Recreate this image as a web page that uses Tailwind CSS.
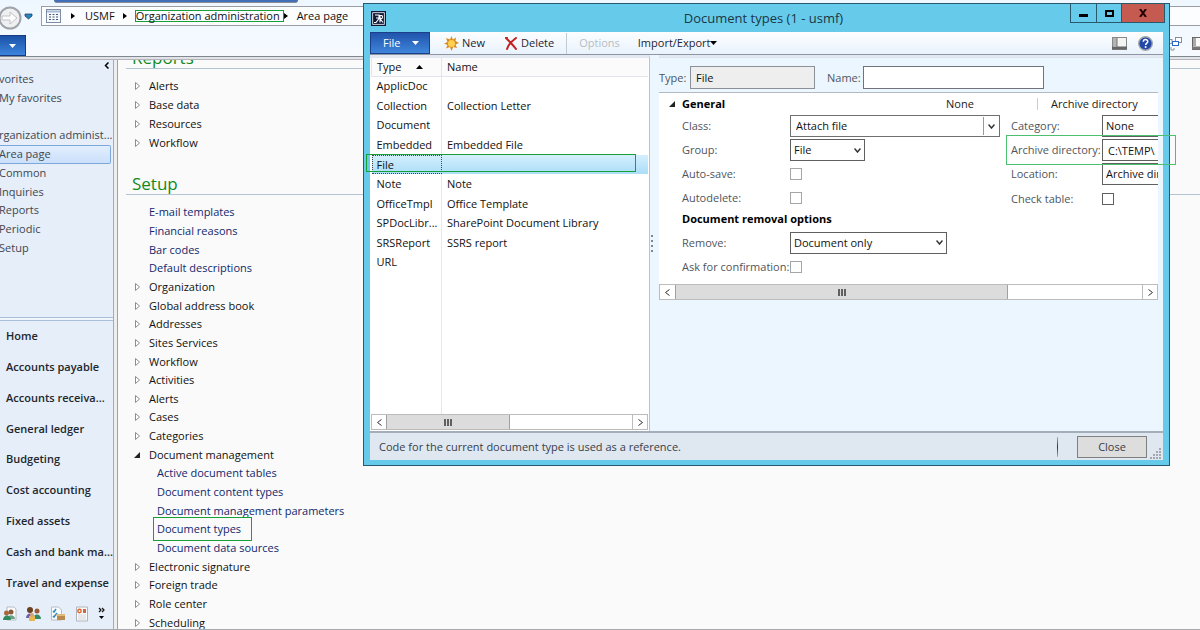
<!DOCTYPE html>
<html lang="en">
<head>
<meta charset="utf-8">
<title>Area page</title>
<script src="https://cdn.jsdelivr.net/npm/@tailwindcss/browser@4"></script>
</head>
<body class="relative flex h-screen flex-col overflow-hidden bg-[#fafafa] font-['Open_Sans','Noto_Sans',sans-serif] text-[11px] leading-4 text-[#111]">

<!-- Main window header -->
<header class="relative flex h-[57px] shrink-0 flex-col border-b border-[#808890] bg-linear-to-b from-[#eef7ff] to-[#f6faff]">
  <div class="absolute top-0 left-[54px] h-[3px] w-[244px] rounded-b-sm border-b border-[#8c8c98] bg-[#4270b8]"></div>
  <div class="flex h-[26px] items-end">
    <button aria-label="Forward" class="-ml-0.5 -mb-1"><svg width="24" height="24" viewBox="0 0 24 24"><circle cx="12" cy="12" r="10.5" fill="#eef0f2" stroke="#a0a4a8" stroke-width="2"/><path d="M4 10h8V6l7 6-7 6v-4H4z" fill="#fdfdfd" stroke="#c0c2c6"/></svg></button>
    <button aria-label="History" class="ml-0.5 mb-1.5"><svg width="9" height="7" viewBox="0 0 9 7"><path d="M1 1h7v2L4.500 6 1 3z" fill="#2a84bc" stroke="#1c4470" stroke-width=".8"/></svg></button>
    <nav aria-label="Address" class="ml-2 flex h-5 flex-1 items-center border border-r-0 border-[#9a9ea4] bg-[#fcfdff] pl-1">
      <svg width="15" height="14" viewBox="0 0 15 14"><rect x=".5" y=".5" width="14" height="13" fill="#f4f7fb" stroke="#7e8da4"/><path d="M1 2.500h13" stroke="#a9bad4" stroke-width="2"/><path d="M3 5.500h2M6.500 5.500h2M10 5.500h2M3 8h2M6.500 8h2M10 8h2M3 10.500h2M6.500 10.500h2M10 10.500h2" stroke="#4c5870"/></svg>
      <svg class="ml-[10px]" width="4" height="6"><path d="M0 0l4 3-4 3z"/></svg>
      <a href="#" class="ml-[10px]">USMF</a>
      <svg class="ml-2" width="4" height="6"><path d="M0 0l4 3-4 3z"/></svg>
      <a href="#" class="ml-2 h-[12px] w-[149px] border border-[#17a035] leading-[10px] whitespace-nowrap">Organization administration</a>
      <svg width="4" height="6"><path d="M0 0l4 3-4 3z"/></svg>
      <a href="#" class="ml-[9px]">Area page</a>
    </nav>
  </div>
  <div class="flex flex-1 items-end justify-between">
    <button aria-label="File menu" class="flex h-[21px] w-[26px] items-center justify-center border border-l-0 border-[#173a80] bg-linear-to-b from-[#1c52a8] to-[#3c84dc]"><svg width="7" height="4"><path d="M0 0h7L3.500 4z" fill="#fff"/></svg></button>
    <div class="flex items-start gap-2 pb-[5px]">
      <svg width="14" height="14" viewBox="0 0 14 14" fill="#fff" stroke="#8a8e96"><rect x="5.500" y=".5" width="6" height="5"/><rect x="-3" y="2.500" width="5" height="4"/><path d="M1 10v3h3v-2"/><rect x="2.500" y="4.500" width="6" height="4" stroke="#2766c8"/></svg>
      <svg width="8" height="13" viewBox="0 0 8 13"><rect x=".5" y=".5" width="12" height="12" fill="#fafafa" stroke="#666"/><path d="M1 1h3v8H1z" fill="#aaa"/><path d="M0 11h8" stroke="#777" stroke-width="3"/></svg>
    </div>
  </div>
</header>
<div class="h-[3px] shrink-0 border-b border-[#b4b4ba] bg-[#e2e3e8]"></div>

<div class="flex min-h-0 flex-1 border-b border-[#a8a8ac]">
  <!-- Navigation pane -->
  <aside class="relative flex w-[114px] shrink-0 flex-col border-r border-[#a4aab6] bg-[#e5eef9]">
    <button aria-label="Collapse" class="absolute top-0.5 right-1"><svg width="5" height="7"><path d="M4.500 .5L1.500 3.500l3 3" fill="none" stroke="#000" stroke-width="1.500"/></svg></button>
    <nav class="mt-[10px] grid h-[187px] auto-rows-fr items-center whitespace-nowrap text-[#42464e]">
      <a href="#" class="-ml-px">vorites</a>
      <a href="#" class="-ml-px">My favorites</a>
      <span></span>
      <a href="#" class="-ml-px">rganization administ...</a>
      <a href="#" class="-ml-px mr-0.5 flex items-center self-stretch rounded-r-xs border border-l-0 border-[#7da7d8] bg-linear-to-b from-[#e2eefd] to-[#cbe0fb]">Area page</a>
      <a href="#" class="-ml-px">Common</a>
      <a href="#" class="-ml-px">Inquiries</a>
      <a href="#" class="-ml-px">Reports</a>
      <a href="#" class="-ml-px">Periodic</a>
      <a href="#" class="-ml-px">Setup</a>
    </nav>
    <div class="mt-auto h-1 border-y border-[#a9bfdc] bg-[#f0f5fb]"></div>
    <nav class="grid h-[277px] auto-rows-fr items-center pl-1.5 font-semibold whitespace-nowrap text-[#22262c]">
      <a href="#">Home</a><a href="#">Accounts payable</a><a href="#">Accounts receiva...</a><a href="#">General ledger</a><a href="#">Budgeting</a><a href="#">Cost accounting</a><a href="#">Fixed assets</a><a href="#">Cash and bank ma...</a><a href="#">Travel and expense</a>
    </nav>
    <div class="flex h-[31px] items-center gap-[9px] pl-0.5">
      <button aria-label="Human resources"><svg width="15" height="16" viewBox="0 0 15 16"><path d="M5 1h7l2 2v11H5z" fill="#fafbfc" stroke="#b8bcc2"/><circle cx="9" cy="6" r="2.500" fill="#8c5a38"/><path d="M5 13c0-5 8-5 8 0z" fill="#6aa088"/><circle cx="4.500" cy="7" r="2.500" fill="#a8683c"/><path d="M1 14c0-6 8-6 8 0z" fill="#2e8a5c"/></svg></button>
      <button aria-label="Customers"><svg width="15" height="16" viewBox="0 0 15 16"><circle cx="4" cy="4" r="3" fill="#6b4020"/><path d="M0 12c0-6 8-6 8 0z" fill="#6f5fa8"/><circle cx="11" cy="5" r="2.500" fill="#9c5a34"/><path d="M7 13c0-6 8-6 8 0z" fill="#348a64"/><path d="M3 10h6v5H3z" fill="#e8b850"/><circle cx="6" cy="9" r="2" fill="#d8a470"/></svg></button>
      <button aria-label="Procurement"><svg width="15" height="16" viewBox="0 0 15 16"><path d="M1.500 1h7l3 3v10h-10z" fill="#fafbfc" stroke="#b8bcc2"/><path d="M3 5l1 1 2-3M3 10l1 1 3-4" fill="none" stroke="#2c8cc8" stroke-width="1.500"/><path d="M7 9h8v5H7z" fill="#b88a50"/><path d="M6.500 8h8.500v2H6.500z" fill="#dfba78"/></svg></button>
      <button aria-label="Sales"><svg width="15" height="16" viewBox="0 0 15 16"><path d="M2.500 1h11v14h-11z" fill="#fbfbfc" stroke="#b0b4ba"/><circle cx="5.500" cy="5" r="1.700" fill="none" stroke="#e06428" stroke-width="1.400"/><path d="M9 3h3v4H9z" fill="#cc6650"/><path d="M4 9h8M4 11h8M4 13h8" stroke="#d0d4d8"/></svg></button>
      <button aria-label="More modules"><svg width="8" height="14" viewBox="0 0 8 14"><path d="M1 1l2 2-2 2M4 1l2 2-2 2" fill="none" stroke="#111" stroke-width="1.200"/><path d="M1 9h5L3.500 12z"/></svg></button>
    </div>
  </aside>
  <div class="w-1 shrink-0 border-r border-[#a0a0a6] bg-[#eeeeef]"></div>

  <!-- Area page content -->
  <main class="flex min-w-0 flex-1 flex-col overflow-hidden pl-2 whitespace-nowrap">
    <div class="flex h-[9px] shrink-0 items-end border-b border-[#b4c4d2] pl-1.5"><h2 class="text-[17px] leading-5 text-[#128a1c]">Reports</h2></div>
    <div class="mt-2 grid h-[75px] shrink-0 auto-rows-fr items-center" id="reports"></div>
    <h2 class="mt-[19px] h-[24px] shrink-0 border-b border-[#b4c4d2] pl-1.5 text-[17px] leading-[26px] text-[#128a1c]">Setup</h2>
    <div class="mt-2 grid h-[429px] shrink-0 auto-rows-fr items-center" id="setup"></div>
  </main>
</div>

<!-- Document types dialog -->
<section role="dialog" aria-labelledby="dlg" class="absolute top-[3px] left-[363px] flex h-[463px] w-[807px] flex-col border border-[#275a70] bg-[#66cbea] px-1.5 pb-[5px]">
  <div class="relative flex h-[28px] shrink-0 items-center">
    <svg class="ml-px" width="15" height="15" viewBox="0 0 15 15"><rect x=".75" y=".75" width="13.500" height="13.500" fill="#101838" stroke="#101838" stroke-width="1.500"/><rect x="1.700" y="1.700" width="11.600" height="11.600" fill="none" stroke="#fff" stroke-width=".8"/><path d="M4 4h4v3.500L5 11.500H3M5 7h3M9 11.500V4.500h2q1 1.500 0 3H9l3 4" fill="none" stroke="#fff" stroke-width="1.100"/></svg>
    <h1 id="dlg" class="flex-1 pr-[22px] text-center text-[13px] leading-4 text-[#1c3644]">Document types (1 - usmf)</h1>
    <div class="absolute -top-px right-[-2px] flex h-5 border border-[#265a6c]">
      <button aria-label="Minimize" class="flex w-[26px] items-center justify-center border-r border-[#265a6c]"><svg width="9" height="3" class="mt-1"><path d="M0 0h9v3H0z"/></svg></button>
      <button aria-label="Maximize" class="flex w-[25px] items-center justify-center border-r border-[#265a6c]"><svg width="9" height="7"><rect x="1" y="1" width="7" height="5" fill="none" stroke="#000" stroke-width="2"/></svg></button>
      <button aria-label="Close window" class="flex w-[42px] items-center justify-center bg-[#c45a50]"><svg width="8" height="8"><path d="M1 0l6 8M7 0L1 8" stroke="#200" stroke-width="2"/></svg></button>
    </div>
  </div>

  <div class="flex h-[23px] shrink-0 items-center border-b border-[#8c96a4] bg-linear-to-b from-[#fcfeff] to-[#e9f2fc] text-[#1e2430]">
    <button class="flex h-[22px] w-[60px] items-center justify-between border border-[#1c3f8c] bg-linear-to-b from-[#2254ac] to-[#3e86da] pr-[10px] pl-3 text-[11px] text-white">File <svg width="7" height="4"><path d="M0 0h7L3.500 4z" fill="#fff"/></svg></button>
    <button class="ml-[14px] flex items-center gap-[3px]"><svg width="15" height="15" viewBox="0 0 15 15"><path d="M7.500 0l1.300 3.500L12 1.500l-.5 3.500 3.500 2-3.500 1.500L13 12l-3.800-1-1.700 4-1.500-4L2 12.500 3.500 9 0 7.500 3.500 6 2 2l4 1.500z" fill="#dc8a1c"/><circle cx="7.500" cy="7.500" r="3.500" fill="#fcd050"/></svg>New</button>
    <button class="ml-[19px] flex items-center gap-[3px]"><svg width="14" height="13" viewBox="0 0 14 13"><path d="M2 1c3 3 7 7 10 11M12 1C8 4 4 8 3 12" fill="none" stroke="#c42020" stroke-width="2" stroke-linecap="round"/><path d="M1 1l3-.5" stroke="#c42020"/></svg>Delete</button>
    <span class="ml-3 h-[21px] w-px bg-[#c2cad4]"></span>
    <button disabled class="ml-3 text-[#b6bcc4]">Options</button>
    <button class="ml-[18px] flex items-center">Import/Export<svg width="7" height="4"><path d="M0 0h7L3.500 4z"/></svg></button>
    <button aria-label="View" class="ml-auto"><svg width="15" height="13" viewBox="0 0 15 13"><rect x=".5" y=".5" width="14" height="12" fill="#f4f4f4" stroke="#888"/><path d="M1 1h4v8H1z" fill="#b4b4b4"/><path d="M5 1v9" stroke="#777"/><path d="M0 11h15" stroke="#666" stroke-width="3"/></svg></button>
    <button aria-label="Help" class="mr-[10px] ml-[11px]"><svg width="15" height="15" viewBox="0 0 15 15"><circle cx="7.500" cy="7.500" r="6.800" fill="#2348a8" stroke="#a2a6ae" stroke-width="1.400"/><path d="M5.300 5.800c0-3 4.500-2.800 4.500-.3 0 1.700-2.200 1.500-2.200 3.500" fill="none" stroke="#fff" stroke-width="1.500"/><circle cx="7.600" cy="11" r="1" fill="#fff"/></svg></button>
  </div>

  <div class="flex min-h-0 flex-1 bg-[#ebf6ff]">
    <!-- Record list -->
    <div class="relative flex w-[280px] flex-col border-t-3 border-r border-t-[#e4e9f1] border-r-[#b8c4d4] bg-white pr-px pl-px">
      <table class="h-[214px] w-full table-fixed border-collapse text-left">
        <colgroup><col class="w-[70px]"><col></colgroup>
        <thead><tr class="h-[18px] bg-[#fbfbfb]"><th class="border border-t-0 border-[#e2e6ec] p-0 pl-[5px] font-normal"><span class="flex items-center justify-between pr-[18px]">Type <svg width="7" height="4"><path d="M0 4h7L3.500 0z"/></svg></span></th><th class="border-b border-[#e2e6ec] p-0 pl-[5px] font-normal">Name</th></tr></thead>
        <tbody id="rows"></tbody>
      </table>
      <div class="flex-1"><div class="h-full w-[71px] border-r border-[#dfeaf4]"></div></div>
      <div class="mb-px flex h-4 border border-[#bcbcbc] bg-white">
        <button aria-label="Scroll left" class="flex w-[14px] items-center justify-center"><svg width="5" height="7"><path d="M4.500 .5l-4 3 4 3" fill="none" stroke="#333"/></svg></button>
        <div class="flex w-[124px] items-center justify-center gap-px border-x border-[#a0a0a0] bg-[#dcdcdc]"><i class="h-[7px] w-0.5 bg-[#606060]"></i><i class="h-[7px] w-0.5 bg-[#606060]"></i><i class="h-[7px] w-0.5 bg-[#606060]"></i></div>
        <button aria-label="Scroll right" class="ml-auto flex w-[15px] items-center justify-center border-l border-[#bcbcbc]"><svg width="5" height="7"><path d="M.5 .5l4 3-4 3" fill="none" stroke="#333"/></svg></button>
      </div>
      <div class="pointer-events-none absolute top-[96px] -left-1 h-[18px] w-[270px] border border-[#17a035]"></div>
    </div>
    <div class="flex w-[9px] flex-col justify-center gap-[3px] pl-px"><i class="size-0.5 bg-[#7c8898]"></i><i class="size-0.5 bg-[#7c8898]"></i><i class="size-0.5 bg-[#7c8898]"></i><i class="size-0.5 bg-[#7c8898]"></i></div>

    <!-- Record details -->
    <form class="flex min-w-0 flex-1 flex-col text-[#50555c]">
      <div class="h-[3px] border-b border-[#dbe4ee] bg-[#e4e9f1]"></div>
      <div class="flex h-[34px] items-end pb-[3px]">
        <label for="type" class="w-[31px] leading-[23px]">Type:</label>
        <input id="type" value="File" readonly class="h-[23px] w-[125px] border border-[#8c9198] bg-[#eee] px-[5px] text-[#111]">
        <label for="name" class="ml-3 w-9 leading-[23px]">Name:</label>
        <input id="name" class="h-[23px] w-[181px] border border-[#70747a] bg-white px-[5px]">
      </div>
      <div class="relative mr-[5px] h-[192px]">
        <div class="h-full overflow-hidden border-t border-[#b4bac2] bg-white pl-[23px] whitespace-nowrap">
          <div class="flex h-[22px] items-center pb-px text-[#222]">
            <svg class="-ml-[13px] mr-[7px]" width="6" height="6"><path d="M6 0v6H0z" fill="#222"/></svg>
            <h2 class="w-[264px] text-[11px] font-bold text-black">General</h2>
            <span class="w-[91px]">None</span><span class="h-3 w-[14px] border-l border-[#ccc]"></span><span>Archive directory</span>
          </div>
          <div class="flex">
            <div class="flex w-[329px] shrink-0 flex-col">
              <div class="mb-0.5 flex h-[22px] items-center"><label for="class" class="w-[108px]">Class:</label>
                <div class="flex h-[22px] w-[210px] border border-[#707070] bg-white"><input id="class" value="Attach file" class="min-w-0 flex-1 pl-[5px] text-[#111]"><button type="button" aria-label="Open list" class="my-px flex w-4 items-center justify-center border-l border-[#999]"><svg width="7" height="5"><path d="M.5 .5l3 3.500 3-3.500" fill="none" stroke="#333" stroke-width="1.500"/></svg></button></div></div>
              <div class="flex h-[22px] items-center"><label for="group" class="w-[108px]">Group:</label>
                <div class="relative flex items-center"><select id="group" class="h-[22px] w-[75px] appearance-none border border-[#606060] bg-white pl-[3px] text-[#111]"><option>File</option></select><svg class="pointer-events-none absolute right-1" width="7" height="5"><path d="M.5 .5l3 3.500 3-3.500" fill="none" stroke="#333" stroke-width="1.500"/></svg></div></div>
              <div class="flex h-[26px] items-center"><label for="autosave" class="w-[108px]">Auto-save:</label><input id="autosave" type="checkbox" class="size-3 appearance-none border border-[#a6a6a6] bg-white"></div>
              <div class="flex h-[22px] items-center"><label for="autodel" class="w-[108px]">Autodelete:</label><input id="autodel" type="checkbox" class="size-3 appearance-none border border-[#a6a6a6] bg-white"></div>
              <h3 class="h-[22px] leading-5 font-bold text-black">Document removal options</h3>
              <div class="flex h-[23px] items-center"><label for="remove" class="w-[108px]">Remove:</label>
                <div class="relative flex items-center"><select id="remove" class="h-[22px] w-[157px] appearance-none border border-[#606060] bg-white pl-[3px] text-[#111]"><option>Document only</option></select><svg class="pointer-events-none absolute right-1" width="7" height="5"><path d="M.5 .5l3 3.500 3-3.500" fill="none" stroke="#333" stroke-width="1.500"/></svg></div></div>
              <div class="flex h-[25px] items-center"><label for="ask" class="w-[108px]">Ask for confirmation:</label><input id="ask" type="checkbox" class="size-3 appearance-none border border-[#a6a6a6] bg-white"></div>
            </div>
            <div class="flex shrink-0 flex-col gap-0.5">
              <div class="flex h-[22px] items-center"><label for="cat" class="w-[91px]">Category:</label><select id="cat" class="h-[22px] w-[160px] appearance-none border border-[#606060] bg-white pl-[3px] text-[#111]"><option>None</option></select></div>
              <div class="flex h-[22px] items-center"><label for="arch" class="w-[91px]">Archive directory:</label><input id="arch" value="C:\TEMP\" class="h-[22px] w-[160px] border border-[#606060] bg-white pl-[5px] text-[#111]"></div>
              <div class="flex h-[22px] items-center"><label for="loc" class="w-[91px]">Location:</label><select id="loc" class="h-[22px] w-[160px] appearance-none border border-[#606060] bg-white pl-[3px] text-[#111]"><option>Archive directory</option></select></div>
              <div class="flex h-[24px] items-center"><label for="check" class="w-[91px]">Check table:</label><input id="check" type="checkbox" class="size-3 appearance-none border border-[#606060] bg-white"></div>
            </div>
          </div>
        </div>
        <div class="pointer-events-none absolute top-[43px] left-[347px] h-[30px] w-[170px] border border-[#4cc070]"></div>
      </div>
      <div class="mr-[5px] flex h-4 border border-[#bcbcbc] bg-white">
        <button type="button" aria-label="Scroll form left" class="flex w-[15px] items-center justify-center"><svg width="5" height="7"><path d="M4.500 .5l-4 3 4 3" fill="none" stroke="#333"/></svg></button>
        <div class="flex w-[333px] items-center justify-center gap-px border-x border-[#a0a0a0] bg-[#dcdcdc]"><i class="h-[7px] w-0.5 bg-[#606060]"></i><i class="h-[7px] w-0.5 bg-[#606060]"></i><i class="h-[7px] w-0.5 bg-[#606060]"></i></div>
        <button type="button" aria-label="Scroll form right" class="ml-auto flex w-[15px] items-center justify-center border-l border-[#bcbcbc]"><svg width="5" height="7"><path d="M.5 .5l4 3-4 3" fill="none" stroke="#333"/></svg></button>
      </div>
    </form>
  </div>

  <footer class="flex h-[29px] shrink-0 items-center border-t-2 border-[#a4adba] bg-[#dfe7f1] pl-[9px] text-[#384048]">
    <span class="flex-1">Code for the current document type is used as a reference.</span>
    <span class="h-5 w-px bg-linear-to-b from-[#a0b4cc] via-[#103860] to-[#a0b4cc]"></span>
    <button class="ml-[19px] h-[22px] w-[70px] border border-[#808080] bg-[#ddd]">Close</button>
    <svg class="mr-0.5 mb-px ml-[3px] self-end" width="11" height="11" fill="#a4a8ae"><path d="M9 0h2v2H9zM6 3h2v2H6zM9 3h2v2H9zM3 6h2v2H3zM6 6h2v2H6zM9 6h2v2H9zM0 9h2v2H0zM3 9h2v2H3zM6 9h2v2H6zM9 9h2v2H9z"/></svg>
  </footer>
</section>

<script>
  // Kinds: g = collapsed group, o = open group, l = link, s = link inside a group, c = current link
  const closed = '<svg class="ml-[9px] mr-[9px]" width="5" height="8"><path d="M.5 .5v7l4-3.500z" fill="#fff" stroke="#8c8c8c"/></svg>';
  const open = '<svg class="ml-[8px] mr-[9px]" width="6" height="6"><path d="M6 0v6H0z" fill="#222"/></svg>';
  const item = ([kind, text]) => {
    if (kind === 'g') return `<button class="flex items-center">${closed}${text}</button>`;
    if (kind === 'o') return `<button class="flex items-center">${open}${text}</button>`;
    if (kind === 'l') return `<a href="#" class="pl-[23px] text-[#10286c]">${text}</a>`;
    if (kind === 's') return `<a href="#" class="pl-[31px] text-[#10286c]">${text}</a>`;
    return `<a href="#" class="relative pl-[31px] text-[#10286c]">${text}<span class="absolute -top-1 left-[27px] h-6 w-[99px] border border-[#17a035]"></span></a>`;
  };
  reports.innerHTML = ['Alerts', 'Base data', 'Resources', 'Workflow'].map(t => item(['g', t])).join('');
  setup.innerHTML = [
    ['l', 'E-mail templates'], ['l', 'Financial reasons'], ['l', 'Bar codes'], ['l', 'Default descriptions'],
    ['g', 'Organization'], ['g', 'Global address book'], ['g', 'Addresses'], ['g', 'Sites Services'], ['g', 'Workflow'],
    ['g', 'Activities'], ['g', 'Alerts'], ['g', 'Cases'], ['g', 'Categories'], ['o', 'Document management'],
    ['s', 'Active document tables'], ['s', 'Document content types'], ['s', 'Document management parameters'],
    ['c', 'Document types'], ['s', 'Document data sources'], ['g', 'Electronic signature'], ['g', 'Foreign trade'],
    ['g', 'Role center'], ['g', 'Scheduling']
  ].map(item).join('');
  rows.innerHTML = [
    ['ApplicDoc', ''], ['Collection', 'Collection Letter'], ['Document', ''], ['Embedded', 'Embedded File'], ['File', ''],
    ['Note', 'Note'], ['OfficeTmpl', 'Office Template'], ['SPDocLibr...', 'SharePoint Document Library'],
    ['SRSReport', 'SSRS report'], ['URL', '']
  ].map(([type, name]) => type === 'File'
    ? `<tr class="bg-linear-to-b from-[#d4effd] to-[#a8ddf8]"><td class="p-0 pl-[5px] outline-1 -outline-offset-1 outline-dotted outline-[#444]">${type}</td><td class="p-0 pl-[5px]">${name}</td></tr>`
    : `<tr><td class="border-r border-[#dfeaf4] p-0 pl-[5px]">${type}</td><td class="p-0 pl-[5px]">${name}</td></tr>`).join('');
</script>
</body>
</html>
